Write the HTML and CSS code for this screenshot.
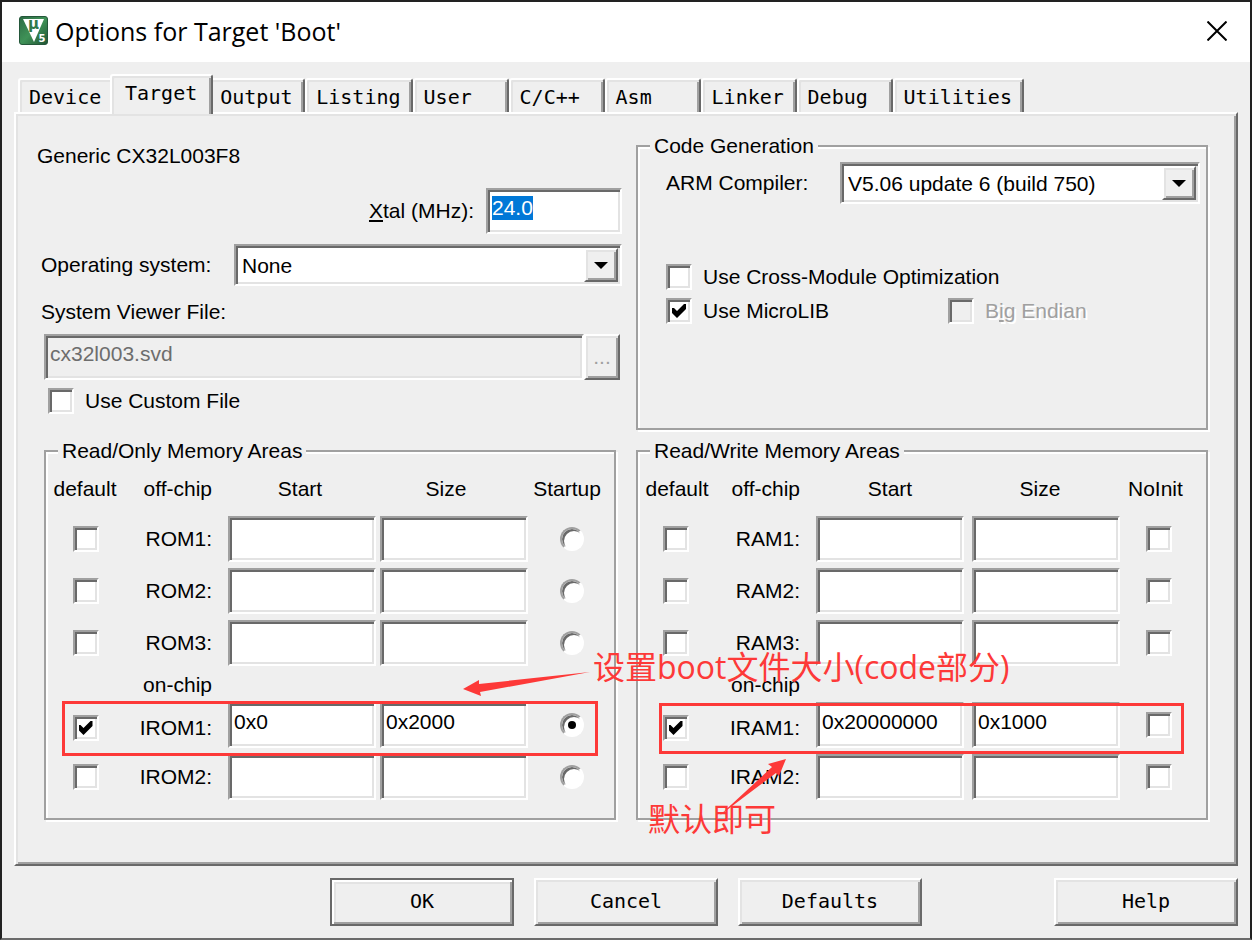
FILE: index.html
```html
<!DOCTYPE html>
<html lang="en">
<head>
    <meta charset="UTF-8">
    <meta name="viewport" content="width=device-width, initial-scale=1.0">
    <title>Options for Target 'Boot'</title>
    <link rel="stylesheet" href="styles.css">
</head>
<body>
    <div class="window">
        <header class="titlebar">
            <svg class="app-icon" viewBox="0 0 29 29" aria-hidden="true">
                <defs>
                    <linearGradient id="green" x1="0" y1="0" x2="1" y2="1">
                        <stop offset="0" stop-color="#2c6a44"/>
                        <stop offset="0.5" stop-color="#3f9257"/>
                        <stop offset="1" stop-color="#1f5233"/>
                    </linearGradient>
                </defs>
                <rect x="0.5" y="0.5" width="28" height="28" rx="2.5" fill="url(#green)" stroke="#24573a"/>
                <path d="M4 3h21L15 26z" fill="#fff"/>
                <text x="14.5" y="13" class="icon-mu">μ</text>
                <text x="23" y="26" class="icon-five">5</text>
            </svg>
            <h1>Options for Target 'Boot'</h1>
            <button class="close" type="button" aria-label="Close">
                <svg viewBox="0 0 20 20"><path d="M0.5 0.5l19 19M19.5 0.5l-19 19"/></svg>
            </button>
        </header>

        <form class="dialog">
            <nav class="tabs">
                <button type="button" class="tab">Device</button>
                <button type="button" class="tab active">Target</button>
                <button type="button" class="tab">Output</button>
                <button type="button" class="tab">Listing</button>
                <button type="button" class="tab">User</button>
                <button type="button" class="tab">C/C++</button>
                <button type="button" class="tab">Asm</button>
                <button type="button" class="tab">Linker</button>
                <button type="button" class="tab">Debug</button>
                <button type="button" class="tab">Utilities</button>
            </nav>

            <div class="panel">
                <section class="target">
                    <p class="device">Generic CX32L003F8</p>
                    <div class="row xtal">
                        <label for="xtal"><u>X</u>tal (MHz):</label>
                        <input class="text" type="text" id="xtal" value="24.0">
                    </div>
                    <div class="row os">
                        <label for="os">Operating system:</label>
                        <div class="combo">
                            <select id="os"><option>None</option></select>
                        </div>
                    </div>
                    <label class="svd-label" for="svd">System Viewer File:</label>
                    <div class="row svd">
                        <input class="text" type="text" id="svd" value="cx32l003.svd" disabled>
                        <button class="browse" type="button" disabled>...</button>
                    </div>
                    <div class="row check custom">
                        <input type="checkbox" id="custom">
                        <label for="custom">Use Custom File</label>
                    </div>
                </section>

                <fieldset class="codegen">
                    <legend>Code Generation</legend>
                    <div class="row compiler">
                        <label for="compiler">ARM Compiler:</label>
                        <div class="combo">
                            <select id="compiler"><option>V5.06 update 6 (build 750)</option></select>
                        </div>
                    </div>
                    <div class="options">
                        <div class="check wide">
                            <input type="checkbox" id="cross">
                            <label for="cross">Use Cross-Module Optimization</label>
                        </div>
                        <div class="check">
                            <input type="checkbox" id="microlib" checked>
                            <label for="microlib">Use MicroLIB</label>
                        </div>
                        <div class="check">
                            <input type="checkbox" id="endian" disabled>
                            <label for="endian">B<u>i</u>g Endian</label>
                        </div>
                    </div>
                </fieldset>

                <fieldset>
                    <legend>Read/Only Memory Areas</legend>
                    <div class="memory rom">
                        <table>
                            <thead>
                                <tr><th class="pick">default</th><th class="name">off-chip</th><th class="start">Start</th><th class="size">Size</th><th class="flag">Startup</th></tr>
                            </thead>
                            <tbody>
                                <tr>
                                    <td class="pick"><input type="checkbox" aria-label="ROM1 default"></td>
                                    <td class="name">ROM1:</td>
                                    <td class="field"><input class="text" type="text" aria-label="ROM1 start"></td>
                                    <td class="field"><input class="text" type="text" aria-label="ROM1 size"></td>
                                    <td class="flag"><input type="radio" name="startup" aria-label="ROM1 startup"></td>
                                </tr>
                                <tr>
                                    <td class="pick"><input type="checkbox" aria-label="ROM2 default"></td>
                                    <td class="name">ROM2:</td>
                                    <td class="field"><input class="text" type="text" aria-label="ROM2 start"></td>
                                    <td class="field"><input class="text" type="text" aria-label="ROM2 size"></td>
                                    <td class="flag"><input type="radio" name="startup" aria-label="ROM2 startup"></td>
                                </tr>
                                <tr>
                                    <td class="pick"><input type="checkbox" aria-label="ROM3 default"></td>
                                    <td class="name">ROM3:</td>
                                    <td class="field"><input class="text" type="text" aria-label="ROM3 start"></td>
                                    <td class="field"><input class="text" type="text" aria-label="ROM3 size"></td>
                                    <td class="flag"><input type="radio" name="startup" aria-label="ROM3 startup"></td>
                                </tr>
                                <tr class="onchip"><td></td><td class="name">on-chip</td><td colspan="3"></td></tr>
                                <tr class="internal">
                                    <td class="pick"><input type="checkbox" aria-label="IROM1 default" checked></td>
                                    <td class="name">IROM1:</td>
                                    <td class="field"><input class="text" type="text" aria-label="IROM1 start" value="0x0"></td>
                                    <td class="field"><input class="text" type="text" aria-label="IROM1 size" value="0x2000"></td>
                                    <td class="flag"><input type="radio" name="startup" aria-label="IROM1 startup" checked></td>
                                </tr>
                                <tr>
                                    <td class="pick"><input type="checkbox" aria-label="IROM2 default"></td>
                                    <td class="name">IROM2:</td>
                                    <td class="field"><input class="text" type="text" aria-label="IROM2 start"></td>
                                    <td class="field"><input class="text" type="text" aria-label="IROM2 size"></td>
                                    <td class="flag"><input type="radio" name="startup" aria-label="IROM2 startup"></td>
                                </tr>
                            </tbody>
                        </table>
                        <div class="frame"></div>
                        <svg class="arrow" viewBox="0 0 128 24"><path d="M0 17L16 8v4L127 0 17 20l1 4z"/></svg>
                        <span class="note" lang="zh">设置boot文件大小(code部分)</span>
                    </div>
                </fieldset>

                <fieldset>
                    <legend>Read/Write Memory Areas</legend>
                    <div class="memory ram">
                        <table>
                            <thead>
                                <tr><th class="pick">default</th><th class="name">off-chip</th><th class="start">Start</th><th class="size">Size</th><th class="flag">NoInit</th></tr>
                            </thead>
                            <tbody>
                                <tr>
                                    <td class="pick"><input type="checkbox" aria-label="RAM1 default"></td>
                                    <td class="name">RAM1:</td>
                                    <td class="field"><input class="text" type="text" aria-label="RAM1 start"></td>
                                    <td class="field"><input class="text" type="text" aria-label="RAM1 size"></td>
                                    <td class="flag"><input type="checkbox" aria-label="RAM1 NoInit"></td>
                                </tr>
                                <tr>
                                    <td class="pick"><input type="checkbox" aria-label="RAM2 default"></td>
                                    <td class="name">RAM2:</td>
                                    <td class="field"><input class="text" type="text" aria-label="RAM2 start"></td>
                                    <td class="field"><input class="text" type="text" aria-label="RAM2 size"></td>
                                    <td class="flag"><input type="checkbox" aria-label="RAM2 NoInit"></td>
                                </tr>
                                <tr>
                                    <td class="pick"><input type="checkbox" aria-label="RAM3 default"></td>
                                    <td class="name">RAM3:</td>
                                    <td class="field"><input class="text" type="text" aria-label="RAM3 start"></td>
                                    <td class="field"><input class="text" type="text" aria-label="RAM3 size"></td>
                                    <td class="flag"><input type="checkbox" aria-label="RAM3 NoInit"></td>
                                </tr>
                                <tr class="onchip"><td></td><td class="name">on-chip</td><td colspan="3"></td></tr>
                                <tr class="internal">
                                    <td class="pick"><input type="checkbox" aria-label="IRAM1 default" checked></td>
                                    <td class="name">IRAM1:</td>
                                    <td class="field"><input class="text" type="text" aria-label="IRAM1 start" value="0x20000000"></td>
                                    <td class="field"><input class="text" type="text" aria-label="IRAM1 size" value="0x1000"></td>
                                    <td class="flag"><input type="checkbox" aria-label="IRAM1 NoInit"></td>
                                </tr>
                                <tr>
                                    <td class="pick"><input type="checkbox" aria-label="IRAM2 default"></td>
                                    <td class="name">IRAM2:</td>
                                    <td class="field"><input class="text" type="text" aria-label="IRAM2 start"></td>
                                    <td class="field"><input class="text" type="text" aria-label="IRAM2 size"></td>
                                    <td class="flag"><input type="checkbox" aria-label="IRAM2 NoInit"></td>
                                </tr>
                            </tbody>
                        </table>
                        <div class="frame"></div>
                        <svg class="arrow" viewBox="0 0 67 57"><path d="M67 0L49 5l4 3L0 57 57 14l3 3z"/></svg>
                        <span class="note" lang="zh">默认即可</span>
                    </div>
                </fieldset>
            </div>

            <footer class="buttons">
                <button type="button" class="default">OK</button>
                <button type="button">Cancel</button>
                <button type="button">Defaults</button>
                <button type="button" class="help">Help</button>
            </footer>
        </form>
    </div>

    <script>
        const xtal = document.getElementById("xtal");
        xtal.focus();
        xtal.select();
    </script>
</body>
</html>
```
FILE: styles.css
```css
*, *::before {
    box-sizing: border-box;
}

body {
    margin: 0;
    background-color: #efefef;
    color: #000;
    font-family: "Liberation Sans", Arial, sans-serif;
    font-size: 21px;
    line-height: 28px;
}

button, input, select {
    margin: 0;
    color: inherit;
    font: inherit;
    border-radius: 0;
}

.window {
    min-height: 100vh;
    border: 2px solid #222;
    border-bottom-color: #6b6b6b;
    background-color: #efefef;
}

/* Title bar */
.titlebar {
    display: flex;
    align-items: center;
    gap: 7px;
    height: 60px;
    padding: 0 23px 3px 17px;
    background-color: #fff;
}

.app-icon {
    width: 29px;
    height: 29px;
}

.icon-mu {
    fill: #2f7a4a;
    font: bold 15px "DejaVu Sans", sans-serif;
    text-anchor: middle;
}

.icon-five {
    fill: #fff;
    font: bold 10px "DejaVu Sans", sans-serif;
    text-anchor: middle;
}

h1 {
    flex: 1;
    margin: 0;
    font: 25px "Open Sans", sans-serif;
}

.close {
    width: 20px;
    height: 20px;
    padding: 0;
    border: 0;
    background: none;
}

.close svg {
    display: block;
    stroke: #000;
    stroke-width: 2;
}

.dialog {
    padding: 12px;
}

/* Tabs */
.tabs {
    display: flex;
    align-items: flex-end;
    height: 38px;
    padding-left: 4px;
}

.tab {
    min-width: 96px;
    height: 34px;
    padding: 2px 10px 0 9px;
    border: 2px solid #fff;
    border-right-color: #696969;
    border-bottom: 0;
    border-radius: 3px 3px 0 0;
    background-color: #efefef;
    box-shadow: inset 2px 2px #e3e3e3, inset -2px 0 #a0a0a0;
    font: 20px "DejaVu Sans Mono", monospace;
    text-align: left;
}

.tab.active {
    position: relative;
    z-index: 1;
    height: 40px;
    margin: 0 -4px -2px;
    padding: 0 14px 4px 13px;
}

.panel {
    display: grid;
    grid-template-columns: 1fr 1fr;
    gap: 7px 20px;
    padding: 18px 28px 44px;
    border: 2px solid;
    border-color: #fff #696969 #696969 #fff;
    box-shadow: inset 2px 2px #e3e3e3, inset -2px -2px #a0a0a0;
}

/* Sunken and raised edges */
.text, select, input[type="checkbox"] {
    border: 2px solid;
    border-color: #a0a0a0 #fff #fff #a0a0a0;
    background-color: #fff;
    box-shadow: inset 2px 2px #696969, inset -2px -2px #e3e3e3;
}

.buttons button, .browse, .combo::before {
    border: 2px solid;
    border-color: #fff #696969 #696969 #fff;
    background-color: #efefef;
    box-shadow: inset 2px 2px #e3e3e3, inset -2px -2px #a0a0a0;
}

.text {
    width: 100%;
    height: 46px;
    padding: 4px 4px 10px;
    outline: 0;
}

.text::selection {
    background-color: #0078d7;
    color: #fff;
}

.text:disabled {
    background-color: #efefef;
    color: #6d6d6d;
}

.combo {
    position: relative;
    flex: 1;
}

.combo select {
    display: block;
    width: 100%;
    height: 42px;
    padding: 2px 40px 0 6px;
    appearance: none;
    outline: 0;
}

.combo::before {
    content: "";
    position: absolute;
    top: 4px;
    right: 4px;
    width: 34px;
    height: 34px;
    pointer-events: none;
}

.combo::after {
    content: "";
    position: absolute;
    top: 18px;
    right: 14px;
    border: 7px solid transparent;
    border-top-color: #000;
    border-bottom: 0;
    pointer-events: none;
}

input[type="checkbox"] {
    display: block;
    flex: none;
    width: 26px;
    height: 26px;
    appearance: none;
}

input[type="checkbox"]:disabled {
    background-color: #efefef;
}

input[type="checkbox"]:checked::before {
    content: "";
    display: block;
    width: 14px;
    height: 14px;
    margin: 4px;
    background-color: #000;
    clip-path: polygon(0 4px, 2px 4px, 5px 7px, 12px 0, 14px 0, 14px 5px, 5px 14px, 0 9px);
}

input[type="radio"] {
    display: block;
    width: 24px;
    height: 24px;
    border: 2px solid;
    border-color: #a0a0a0 #fff #fff #a0a0a0;
    border-radius: 50%;
    background-color: #fff;
    box-shadow: inset 2px 2px #696969;
    appearance: none;
}

input[type="radio"]:checked::before {
    content: "";
    display: block;
    width: 8px;
    height: 8px;
    margin: 6px;
    border-radius: 50%;
    background-color: #000;
}

.row, .check {
    display: flex;
    align-items: center;
}

.check {
    gap: 11px;
    height: 26px;
}

/* Target settings */
.target {
    margin: 0 -6px 0 -3px;
    padding: 10px 0 16px;
}

.device {
    margin: 0 -4px;
}

.xtal {
    justify-content: flex-end;
    gap: 12px;
    margin-top: 18px;
}

.xtal .text {
    width: 136px;
}

.os {
    margin-top: 10px;
}

.os label {
    width: 193px;
}

.svd-label {
    display: block;
    margin-top: 12px;
}

.svd {
    margin: 8px 2px 0 3px;
}

.svd .text {
    flex: 1;
}

.browse {
    width: 36px;
    height: 46px;
    padding: 0;
    color: #a0a0a0;
}

.custom {
    margin: 8px 0 0 7px;
}

fieldset {
    min-width: 0;
    margin: 0;
    padding: 0 0 15px;
    border: 2px solid #a0a0a0;
    box-shadow: 2px 2px #fff, inset 2px 2px #fff;
}

legend {
    margin-left: 12px;
    padding: 0 4px;
    background-color: #efefef;
}

.compiler {
    margin: 2px 6px 0 28px;
}

.compiler label {
    width: 174px;
}

.options {
    display: grid;
    grid-template-columns: 282px 1fr;
    gap: 8px 0;
    margin: 60px 0 0 28px;
}

.wide {
    grid-column: 1 / -1;
}

input:disabled + label {
    color: #a0a0a0;
    text-shadow: 2px 2px #fff;
}

/* Memory areas */
.memory {
    position: relative;
}

table {
    width: 100%;
    table-layout: fixed;
    border-collapse: collapse;
}

th, td {
    height: 52px;
    padding: 0;
    font-weight: normal;
    text-align: center;
}

th {
    height: 48px;
}

.onchip td {
    height: 30px;
    padding-top: 2px;
}

.internal .name, .internal .pick {
    padding-top: 6px;
}

.pick, .rom .flag {
    width: 82px;
}

.ram .pick, .ram .flag {
    width: 78px;
}

td.pick, td.flag {
    padding-right: 3px;
}

.rom th.pick {
    padding-right: 4px;
}

.rom th.flag {
    padding-right: 12px;
}

.ram .flag {
    padding-right: 16px;
}

.ram th.flag {
    padding-right: 24px;
}

.name {
    width: 100px;
    padding-right: 16px;
    text-align: right;
}

.start {
    padding-right: 8px;
}

.size {
    padding-right: 20px;
}

.field {
    padding-right: 4px;
}

.ram .field {
    padding-right: 8px;
}

.field .text {
    display: block;
}

td input[type="checkbox"], td input[type="radio"] {
    margin: 0 auto;
}

/* Red marks over the tables */
.frame, .arrow, .note {
    position: absolute;
    z-index: 2;
    pointer-events: none;
}

.frame {
    border: 3px solid #fd3938;
}

.rom .frame {
    top: 236px;
    right: 16px;
    left: 16px;
    height: 55px;
}

.ram .frame {
    top: 238px;
    right: 22px;
    left: 21px;
    height: 51px;
}

.arrow {
    fill: #fd3938;
}

.rom .arrow {
    top: 207px;
    right: 23px;
    width: 128px;
}

.ram .arrow {
    top: 294px;
    left: 81px;
    width: 67px;
}

.note {
    color: #fd3938;
    font: 32px/40px "Open Sans", "Noto Sans CJK SC", sans-serif;
    white-space: nowrap;
}

.rom .note {
    top: 182px;
    left: calc(100% - 21px);
}

.ram .note {
    top: 334px;
    left: 10px;
}

/* Bottom buttons */
.buttons {
    display: flex;
    justify-content: flex-end;
    gap: 20px;
    margin-top: 12px;
}

.buttons button {
    width: 184px;
    height: 48px;
    padding: 0 0 2px;
    font: 20px "DejaVu Sans Mono", monospace;
}

.buttons .default {
    border-color: #696969;
    box-shadow: inset 2px 2px #fff, inset -2px -2px #a0a0a0, inset 4px 4px #e3e3e3;
}

.buttons .help {
    margin-left: 112px;
}
```
